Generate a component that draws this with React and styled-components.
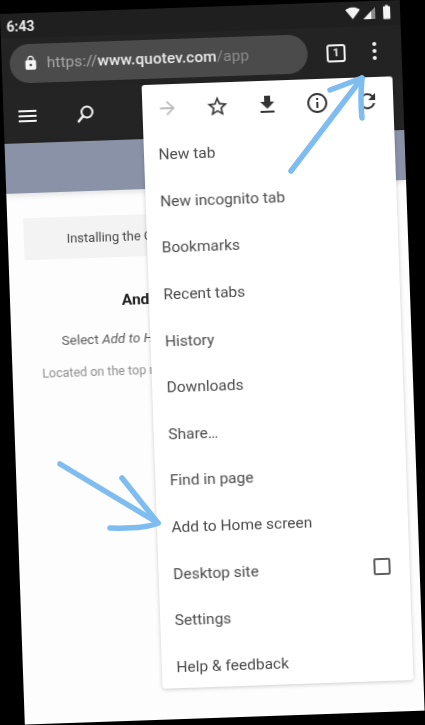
import React from "react";
import styled, { createGlobalStyle } from "styled-components";
import {
  MdArrowForward,
  MdStarBorder,
  MdFileDownload,
  MdInfoOutline,
  MdRefresh,
  MdLock,
  MdMenu,
  MdSignalWifi4Bar,
  MdBatteryFull,
} from "react-icons/md";

const Global = createGlobalStyle`
  html, body {
    margin: 0;
    height: 100%;
    background: #000;
    overflow: hidden;
  }
  #root {
    height: 725px;
    overflow: hidden;
    position: relative;
  }
`;

const Phone = styled.div`
  width: 400px;
  height: 711px;
  position: relative;
  background: #fdfdfd;
  font-family: Roboto, "Liberation Sans", sans-serif;
  transform-origin: 0 0;
  transform: translateY(14px) rotate(-2deg);
  filter: blur(0.7px);
`;

const StatusBar = styled.div`
  height: 25px;
  background: #1f1f1f;
  display: flex;
  align-items: center;
  justify-content: space-between;
  padding: 0 5px 0 6px;
  color: #ececec;
  font-size: 14px;
  font-weight: 700;
`;

const StatusIcons = styled.div`
  display: flex;
  align-items: center;
  gap: 3px;
  margin-top: -2px;
  color: #f4f4f4;
`;

const BrowserBar = styled.div`
  height: 50px;
  background: #232323;
  display: flex;
  align-items: center;
  padding: 0 0 0 8px;
`;

const UrlPill = styled.div`
  width: 298px;
  height: 39px;
  border-radius: 20px;
  background: #4b4b4b;
  display: flex;
  align-items: center;
  padding-left: 13px;
  box-sizing: border-box;
  font-size: 15.4px;
  letter-spacing: 0.1px;
  color: #a8a8a8;
`;

const LockIcon = styled(MdLock)`
  color: #f6f6f6;
  margin-right: 8px;
`;

const Host = styled.span`
  color: #ececec;
  font-weight: 500;
`;

const Faded = styled.span`
  color: #8c8c8c;
`;

const TabCount = styled.div`
  width: 15px;
  height: 14px;
  margin-left: 19px;
  margin-top: 1px;
  border: 2px solid #f4f4f4;
  border-radius: 3px;
  color: #f4f4f4;
  font-size: 11px;
  font-weight: 700;
  display: flex;
  align-items: center;
  justify-content: center;
`;

const Dots = styled.div`
  margin-left: 27px;
  display: flex;
  flex-direction: column;
  gap: 3px;
`;

const Dot = styled.span`
  width: 4px;
  height: 4px;
  border-radius: 50%;
  background: #f4f4f4;
`;

const AppBar = styled.div`
  height: 55px;
  background: #242424;
  display: flex;
  align-items: center;
  gap: 36px;
  padding-left: 12px;
  color: #f4f4f4;
`;

const Band = styled.div`
  height: 50px;
  background: #8a92a8;
  box-shadow: 0 2px 6px rgba(0, 0, 0, 0.12);
`;

const Content = styled.div`
  padding: 25px 16px 0;
  color: #555;
  text-align: center;
`;

const Notice = styled.div`
  height: 42px;
  padding-left: 4px;
  background: #f3f3f3;
  color: #4a4a4a;
  font-size: 13px;
  display: flex;
  align-items: center;
  justify-content: center;
`;

const Heading = styled.h2`
  margin: 33px 0 0;
  font-size: 15.5px;
  line-height: 20px;
  font-weight: 700;
  color: #222;
`;

const Line = styled.p`
  margin: 19px 0 0;
  padding-left: 6px;
  font-size: 13.5px;
  line-height: 18px;
  color: #5c5c5c;
`;

const SmallLine = styled.p`
  margin: 16px 0 0;
  padding-left: 6px;
  font-size: 12.5px;
  line-height: 16px;
  color: #8f8f8f;
`;

const Menu = styled.div`
  position: absolute;
  left: 138.5px;
  top: 76px;
  width: 251px;
  height: 604px;
  background: #fff;
  border-radius: 3px;
  box-shadow: 0 1px 4px rgba(0, 0, 0, 0.2);
`;

const MenuIcons = styled.div`
  height: 47px;
  display: grid;
  grid-template-columns: repeat(5, 50px);
  place-items: center;
  color: #333;
`;

const MenuRow = styled.div`
  height: 46.6px;
  padding: 0 15px;
  display: flex;
  align-items: center;
  justify-content: space-between;
  font-size: 15.5px;
  color: #4c4c4c;
`;

const Checkbox = styled.span`
  width: 13px;
  height: 13px;
  margin-right: 4px;
  border: 2px solid #5e5e5e;
  border-radius: 2px;
`;

const ArrowLayer = styled.svg`
  position: absolute;
  left: 0;
  top: 0;
  filter: blur(0.5px);
`;

const Stroke = styled.path`
  fill: none;
  stroke: #7fbdf0;
  stroke-width: 5.5;
  stroke-linecap: round;
  stroke-linejoin: round;
`;

const items = [
  "New tab",
  "New incognito tab",
  "Bookmarks",
  "Recent tabs",
  "History",
  "Downloads",
  "Share…",
  "Find in page",
  "Add to Home screen",
  "Desktop site",
  "Settings",
  "Help & feedback",
];

const SearchGlyph = () => (
  <svg width="20" height="20" viewBox="0 0 20 20" fill="none" stroke="currentColor" strokeWidth="2" strokeLinecap="round">
    <circle cx="11.5" cy="8" r="5.5" />
    <path d="M7.5 12 3 17" strokeWidth="2.6" />
  </svg>
);

const SignalGlyph = () => (
  <svg width="12" height="12" viewBox="0 0 12 12">
    <path d="M12 0v12H0z" fill="#8a8a8a" />
    <path d="M8 4v8H0z" fill="#f4f4f4" />
  </svg>
);

export default function App() {
  return (
    <>
      <Global />
      <Phone>
        <StatusBar>
          <span>6:43</span>
          <StatusIcons>
            <MdSignalWifi4Bar size={15} />
            <SignalGlyph />
            <MdBatteryFull size={17} />
          </StatusIcons>
        </StatusBar>
        <BrowserBar>
          <UrlPill>
            <LockIcon size={16} />
            https://<Host>www.quotev.com</Host>
            <Faded>/app</Faded>
          </UrlPill>
          <TabCount>1</TabCount>
          <Dots>
            <Dot />
            <Dot />
            <Dot />
          </Dots>
        </BrowserBar>
        <AppBar>
          <MdMenu size={24} />
          <SearchGlyph />
        </AppBar>
        <Band />
        <Content>
          <Notice>Installing the Quotev App on to your Home Screen</Notice>
          <Heading>Android - Google Chrome</Heading>
          <Line>
            Select <em>Add to Home screen</em> from the Chrome menu.
          </Line>
          <SmallLine>Located on the top right of the browser window, the three dots.</SmallLine>
        </Content>
        <Menu>
          <MenuIcons>
            <MdArrowForward size={22} color="#bdbdbd" />
            <MdStarBorder size={24} />
            <MdFileDownload size={24} />
            <MdInfoOutline size={24} />
            <MdRefresh size={24} />
          </MenuIcons>
          {items.map((label) => (
            <MenuRow key={label}>
              {label}
              {label === "Desktop site" && <Checkbox />}
            </MenuRow>
          ))}
        </Menu>
      </Phone>
      <ArrowLayer width="425" height="725" viewBox="0 0 425 725">
        <Stroke d="M291 171 L362 78" />
        <Stroke d="M330 90 L362 78 Q360 100 362 118" />
        <Stroke d="M60 464 L158 523" />
        <Stroke d="M122 478 L158 523 Q145 529 110 528" />
      </ArrowLayer>
    </>
  );
}
